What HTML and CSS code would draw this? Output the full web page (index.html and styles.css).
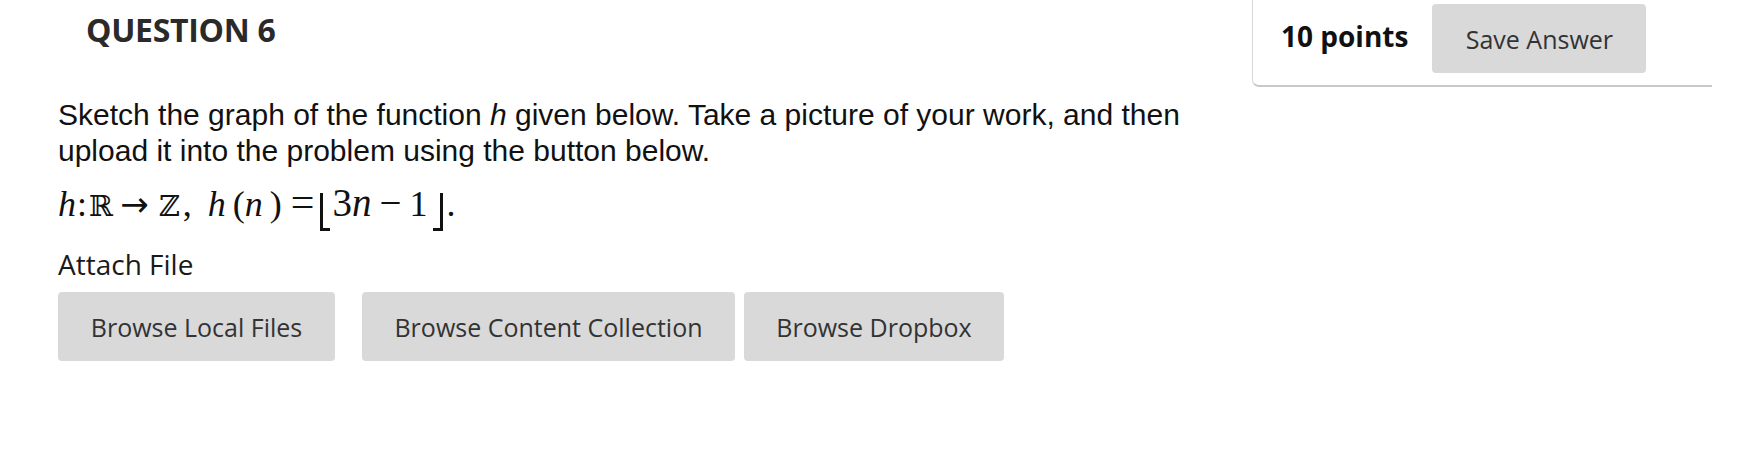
FILE: index.html
```html
<!DOCTYPE html>
<html lang="en">
<head>
<meta charset="utf-8">
<title>Question 6</title>
<link rel="stylesheet" href="styles.css">
</head>
<body>
<div class="page">
  <div class="top">
    <h2 class="heading">QUESTION 6</h2>
    <div class="card">
      <span class="points">10 points</span>
      <button class="btn save">Save Answer</button>
    </div>
  </div>
  <div class="content">
    <p class="prompt">Sketch the graph of the function <i>h</i> given below. Take a picture of your work, and then upload it into the problem using the button below.</p>
    <p class="math"><i>h</i><span class="colon">:</span><span class="ds r">ℝ</span><span class="arrow">→</span><span class="ds z">ℤ</span><span class="comma">,</span><i class="h2">h</i><span class="lp">(</span><i>n</i><span class="rp">)</span><span class="eq">=</span><span class="fl-l"></span><span class="big">3<i>n</i></span><span class="minus">−</span><span class="one">1</span><span class="fl-r"></span><span class="dot">.</span></p>
    <div class="attach">Attach File</div>
    <div class="buttons">
      <button class="btn browse local">Browse Local Files</button>
      <button class="btn browse collection">Browse Content Collection</button>
      <button class="btn browse dropbox">Browse Dropbox</button>
    </div>
  </div>
</div>
</body>
</html>
```

FILE: styles.css
```css
html, body {
  margin: 0;
  padding: 0;
  background: #ffffff;
}

body {
  font-family: "Open Sans", "Noto Sans", sans-serif;
  color: #333333;
}

.page {
  width: 1746px;
}

.top {
  display: flex;
  justify-content: space-between;
  align-items: flex-start;
  height: 89px;
}

.heading {
  margin: 8px 0 0 86px;
  font-size: 32px;
  font-weight: 700;
  color: #2a2a2a;
  letter-spacing: -0.3px;
  line-height: 44px;
}

.card {
  width: 460px;
  height: 87px;
  box-sizing: border-box;
  margin-right: 34px;
  border-left: 1px solid #d6d6d6;
  border-bottom: 2px solid #c9c9c9;
  border-bottom-left-radius: 7px;
  display: flex;
  align-items: flex-start;
  padding: 4px 0 0 28px;
  gap: 24px;
}

.points {
  font-size: 28px;
  font-weight: 700;
  color: #111111;
  line-height: 64px;
}

.btn {
  font-family: "Open Sans", "Noto Sans", sans-serif;
  font-size: 25px;
  color: #333333;
  background: #d9d9d9;
  border: none;
  border-radius: 4px;
  padding: 0;
  cursor: pointer;
}

.save {
  width: 214px;
  height: 69px;
}

.content {
  padding-left: 58px;
}

.prompt {
  margin: 0;
  padding-top: 8px;
  width: 1150px;
  font-family: "Liberation Sans", Arial, sans-serif;
  font-size: 30px;
  line-height: 36px;
  color: #111111;
}

.math {
  margin: 11px 0 0 0;
  height: 44px;
  font-family: "Liberation Serif", "Times New Roman", serif;
  font-size: 36px;
  line-height: 44px;
  color: #111111;
  white-space: nowrap;
}

.math .colon {
  margin-left: 1px;
}

.math .ds {
  font-family: "DejaVu Serif", serif;
  font-size: 29px;
}

.math .r {
  margin-left: 2px;
}

.math .arrow {
  font-family: "DejaVu Sans", sans-serif;
  font-size: 34px;
  margin-left: 7px;
}

.math .z {
  margin-left: 10px;
}

.math .comma {
  margin-left: 3px;
}

.math .h2 {
  margin-left: 16px;
}

.math .lp {
  margin-left: 7px;
}

.math .rp {
  margin-left: 7px;
}

.math .eq {
  margin-left: 9px;
  font-size: 42px;
}

.math .fl-l,
.math .fl-r {
  display: inline-block;
  width: 10px;
  height: 38px;
  box-sizing: border-box;
  border-bottom: 3px solid #111111;
  vertical-align: -15px;
}

.math .fl-l {
  border-left: 3px solid #111111;
  margin-left: 6px;
  margin-right: 2px;
}

.math .fl-r {
  border-right: 3px solid #111111;
  margin-left: 6px;
}

.math .big {
  font-size: 39px;
}

.math .minus {
  margin-left: 8px;
  font-size: 39px;
}

.math .one {
  margin-left: 8px;
}

.math .dot {
  margin-left: 3px;
}

.attach {
  margin-top: 21px;
  font-size: 28px;
  line-height: 38px;
  color: #1a1a1a;
}

.buttons {
  display: flex;
  margin-top: 9px;
}

.browse {
  height: 69px;
  font-size: 25px;
}

.local {
  width: 277px;
}

.collection {
  width: 373px;
  margin-left: 27px;
}

.dropbox {
  width: 260px;
  margin-left: 9px;
}
```
